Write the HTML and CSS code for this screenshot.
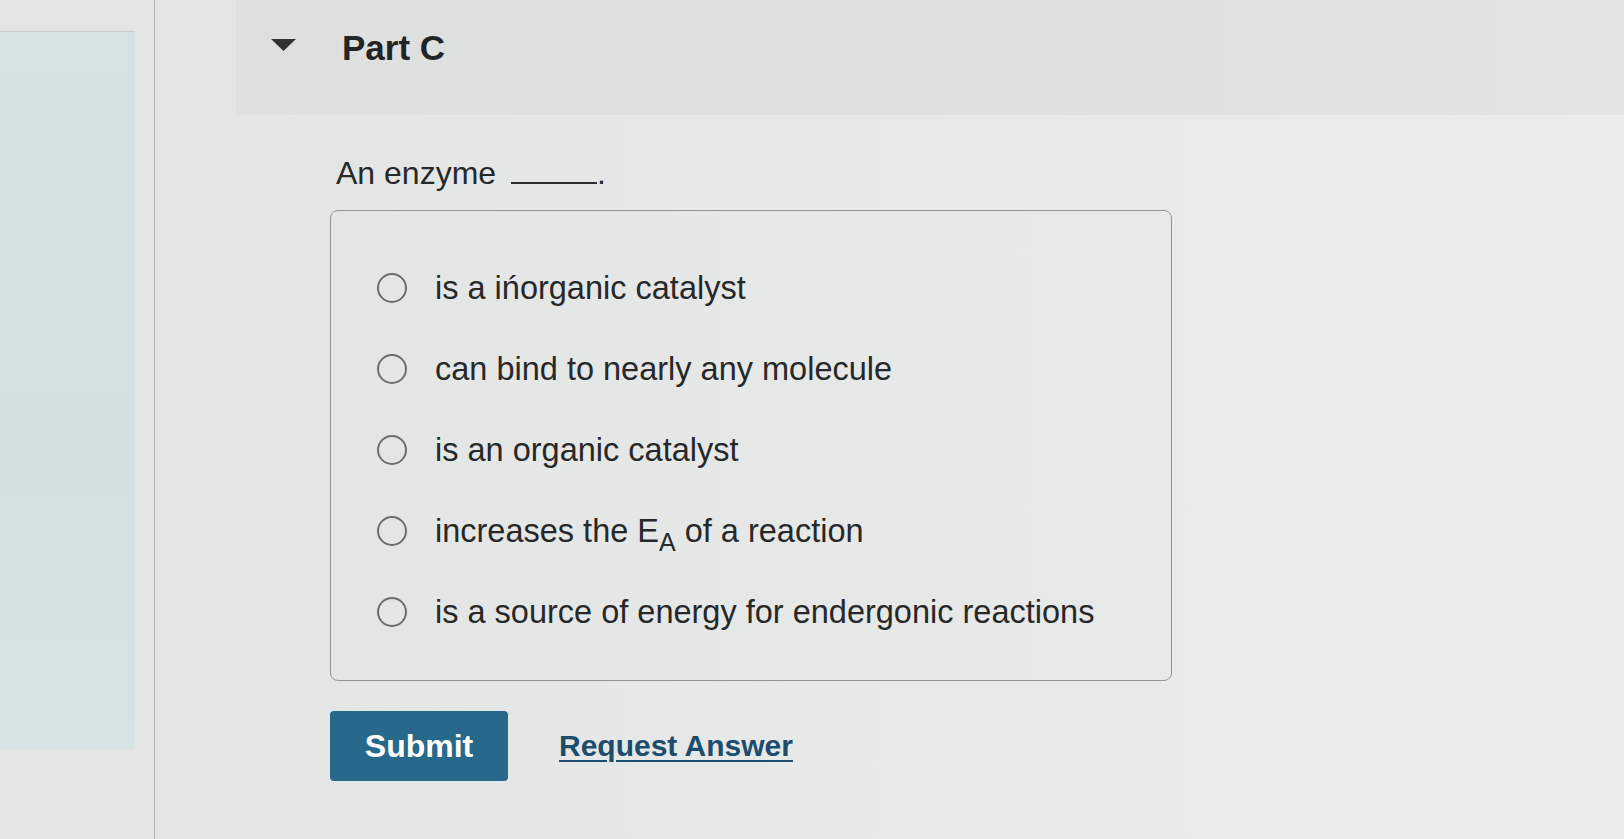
FILE: index.html
```html
<!DOCTYPE html>
<html lang="en">
<head>
  <meta charset="UTF-8">
  <meta name="viewport" content="width=device-width, initial-scale=1">
  <title>Part C</title>
  <link rel="stylesheet" href="styles.css">
</head>
<body>

  <div class="page">
    <div class="sidebar">
      <div class="sidebar-panel"></div>
    </div>

    <div class="content">
      <div class="part-header">
        <svg class="toggle" width="25" height="12" viewBox="0 0 25 12">
          <polygon points="0,0 25,0 12.5,12" fill="#2f3132"/>
        </svg>
        <h2 class="part-title">Part C</h2>
      </div>

      <div class="question">
        <p class="prompt">An enzyme <span class="blank"></span>.</p>

        <div class="options">
          <label class="option"><span class="radio"></span><span class="option-text">is a ińorganic catalyst</span></label>
          <label class="option"><span class="radio"></span><span class="option-text">can bind to nearly any molecule</span></label>
          <label class="option"><span class="radio"></span><span class="option-text">is an organic catalyst</span></label>
          <label class="option"><span class="radio"></span><span class="option-text">increases the E<sub>A</sub> of a reaction</span></label>
          <label class="option"><span class="radio"></span><span class="option-text">is a source of energy for endergonic reactions</span></label>
        </div>

        <div class="actions">
          <button class="submit-btn">Submit</button>
          <a class="request-link" href="#">Request Answer</a>
        </div>
      </div>
    </div>
  </div>

</body>
</html>
```

FILE: styles.css
```css
body {
  margin: 0;
  font-family: "Liberation Sans", Arial, sans-serif;
  color: #262829;
  background: linear-gradient(90deg, #e2e4e3 0%, #e7e9e8 50%, #ebedec 100%);
  height: 839px;
  overflow: hidden;
}

.page {
  display: flex;
  height: 100%;
}

.sidebar {
  width: 154px;
  flex-shrink: 0;
  border-right: 1px solid #b4b8ba;
  background: #e3e5e4;
}

.sidebar-panel {
  margin-top: 31px;
  width: 135px;
  height: 717px;
  background: linear-gradient(180deg, #d3e2e2 0%, #d2e1e0 60%, #d5e3e2 100%);
  border-top: 1px solid #c4cccc;
}

.content {
  flex: 1;
}

.part-header {
  display: flex;
  align-items: flex-start;
  height: 115px;
  margin-left: 81px;
  padding-top: 28px;
  box-sizing: border-box;
  background: linear-gradient(90deg, #dde0df 0%, #dfe1e0 60%, #e2e4e3 100%);
}

.toggle {
  margin-left: 35px;
  margin-top: 11px;
}

.part-title {
  margin: 0 0 0 46px;
  font-size: 35px;
  line-height: 40px;
  font-weight: bold;
  color: #222425;
}

.question {
  padding-left: 175px;
}

.prompt {
  margin: 38px 0 17px 6px;
  font-size: 32px;
  line-height: 40px;
}

.blank {
  display: inline-block;
  width: 86px;
  border-bottom: 2px solid #2b2d2e;
  margin-left: 6px;
  vertical-align: baseline;
}

.options {
  width: 842px;
  box-sizing: border-box;
  padding: 36px 46px 28px;
  border: 1.5px solid #8f9497;
  border-radius: 8px;
  background: linear-gradient(90deg, #e4e6e5 0%, #e8eae9 100%);
}

.option {
  display: flex;
  align-items: center;
  height: 81px;
  font-size: 32.5px;
  line-height: 40px;
}

.option-text sub {
  font-size: 25px;
  line-height: 0;
  vertical-align: -9px;
}

.radio {
  width: 30px;
  height: 30px;
  box-sizing: border-box;
  border: 2.5px solid #6a6e70;
  border-radius: 50%;
  margin-right: 28px;
  flex-shrink: 0;
}

.actions {
  display: flex;
  align-items: center;
  gap: 51px;
  margin-top: 30px;
}

.submit-btn {
  width: 178px;
  height: 70px;
  background: #27698a;
  color: #ffffff;
  border: none;
  border-radius: 4px;
  font-family: "Liberation Sans", Arial, sans-serif;
  font-size: 32px;
  font-weight: bold;
  cursor: pointer;
}

.request-link {
  color: #1c4d6c;
  font-size: 30px;
  font-weight: bold;
  text-decoration: underline;
  text-decoration-thickness: 2px;
  text-underline-offset: 4px;
}
```
